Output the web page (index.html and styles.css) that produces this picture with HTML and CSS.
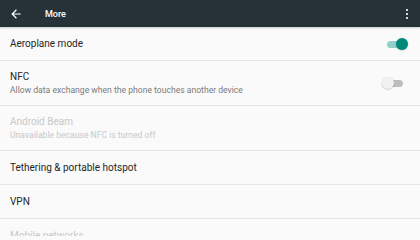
FILE: index.html
```html
<!DOCTYPE html>
<html>
<head>
<meta charset="utf-8">
<link rel="stylesheet" href="styles.css">
</head>
<body>
<div class="app">
  <header class="bar">
    <svg class="back" width="14" height="14" viewBox="0 0 24 24"><path d="M20 11H7.83l5.59-5.59L12 4l-8 8 8 8 1.41-1.41L7.83 13H20v-2z" fill="#fff"/></svg>
    <span class="title">More</span>
    <svg class="menu" width="4" height="12" viewBox="0 0 4 12"><circle cx="2" cy="2" r="1.1" fill="#fff"/><circle cx="2" cy="6" r="1.1" fill="#fff"/><circle cx="2" cy="10" r="1.1" fill="#fff"/></svg>
  </header>
  <div class="list">
    <div class="row single">
      <div class="texts"><div class="primary">Aeroplane mode</div></div>
      <div class="switch on"><span class="track"></span><span class="knob"></span></div>
    </div>
    <div class="row double">
      <div class="texts"><div class="primary">NFC</div><div class="secondary">Allow data exchange when the phone touches another device</div></div>
      <div class="switch off"><span class="track"></span><span class="knob"></span></div>
    </div>
    <div class="row double disabled">
      <div class="texts"><div class="primary">Android Beam</div><div class="secondary">Unavailable because NFC is turned off</div></div>
    </div>
    <div class="row single">
      <div class="texts"><div class="primary">Tethering &amp; portable hotspot</div></div>
    </div>
    <div class="row single">
      <div class="texts"><div class="primary">VPN</div></div>
    </div>
    <div class="row single disabled">
      <div class="texts"><div class="primary">Mobile networks</div></div>
    </div>
  </div>
</div>
</body>
</html>
```
FILE: styles.css
```css
html, body {
  margin: 0;
  padding: 0;
  background: #fafafa;
  font-family: Roboto, "Liberation Sans", sans-serif;
}
.app {
  width: 420px;
  height: 236px;
  overflow: hidden;
  display: flex;
  flex-direction: column;
}
.bar {
  height: 27px;
  flex: none;
  background: #263238;
  display: flex;
  align-items: center;
  padding: 0 11px 0 9px;
  box-shadow: 0 1px 2px rgba(0,0,0,0.2);
}
.back { flex: none; }
.title {
  margin-left: 22px;
  color: #fff;
  font-size: 9px;
  font-weight: 500;
  flex: 1;
}
.menu { flex: none; }
.list {
  display: flex;
  flex-direction: column;
}
.row {
  display: flex;
  align-items: center;
  padding: 0 12px 0 10px;
  border-bottom: 1px solid #e6e6e6;
  box-sizing: border-box;
}
.row.single { height: 34px; }
.row.double { height: 45px; }
.texts { flex: 1; }
.primary {
  font-size: 10px;
  color: #262626;
  line-height: 14px;
}
.secondary {
  font-size: 8.6px;
  color: #7a7a7a;
  line-height: 12px;
}
.disabled .primary, .disabled .secondary { color: #c8c8c8; }
.switch {
  position: relative;
  width: 22px;
  height: 14px;
  flex: none;
}
.track {
  position: absolute;
  top: 4px;
  height: 7px;
  border-radius: 4px;
}
.knob {
  position: absolute;
  top: 1px;
  width: 12px;
  height: 12px;
  border-radius: 50%;
  box-shadow: 0 0.5px 1.5px rgba(0,0,0,0.25);
}
.on .track { left: 1px; width: 16px; background: #8fd0c9; }
.on .knob { left: 10px; background: #00897b; }
.off .track { left: 0; width: 17px; background: #bdbdbd; }
.off .knob { left: -4px; background: #f1f1f1; }
```
